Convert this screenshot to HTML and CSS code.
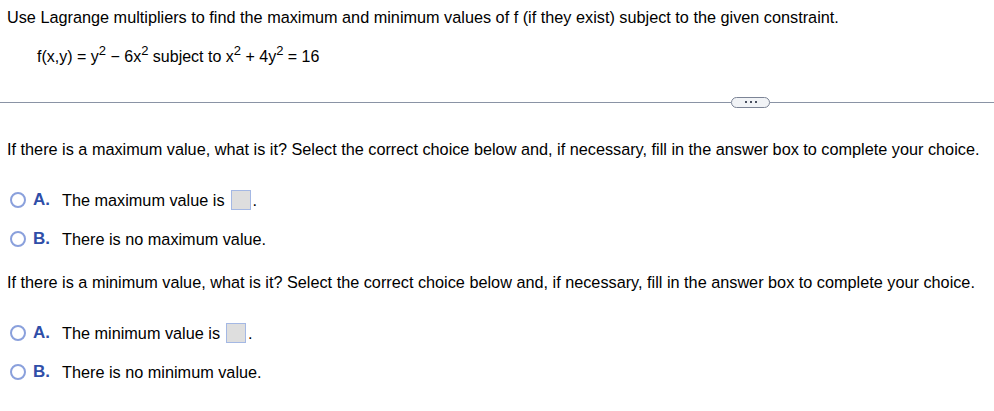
FILE: index.html
```html
<!DOCTYPE html>
<html>
<head>
<meta charset="utf-8">
<link rel="stylesheet" href="styles.css">
</head>
<body>
<div class="page">
  <p class="intro">Use Lagrange multipliers to find the maximum and minimum values of f (if they exist) subject to the given constraint.</p>
  <p class="formula">f(x,y) = y<sup>2</sup> − 6x<sup>2</sup> subject to x<sup>2</sup> + 4y<sup>2</sup> = 16</p>
  <div class="divider">
    <span class="line"></span>
    <span class="pill"><i></i><i></i><i></i></span>
    <span class="line"></span>
  </div>
  <p class="question q1">If there is a maximum value, what is it? Select the correct choice below and, if necessary, fill in the answer box to complete your choice.</p>
  <div class="choices">
    <div class="choice"><span class="radio"></span><span class="letter">A.</span><span class="text">The maximum value is <span class="box"></span>.</span></div>
    <div class="choice"><span class="radio"></span><span class="letter">B.</span><span class="text">There is no maximum value.</span></div>
  </div>
  <p class="question q2">If there is a minimum value, what is it? Select the correct choice below and, if necessary, fill in the answer box to complete your choice.</p>
  <div class="choices">
    <div class="choice"><span class="radio"></span><span class="letter">A.</span><span class="text">The minimum value is <span class="box"></span>.</span></div>
    <div class="choice"><span class="radio"></span><span class="letter">B.</span><span class="text">There is no minimum value.</span></div>
  </div>
</div>
</body>
</html>
```
FILE: styles.css
```css
html, body { margin: 0; padding: 0; background: #fff; }
body { font-family: "Liberation Sans", Arial, sans-serif; font-size: 16.25px; color: #000; }
.page { padding-top: 8px; }
p { margin: 0; }
.intro { padding-left: 7px; line-height: 18px; }
.formula { padding-left: 37px; margin-top: 22px; line-height: 18px; font-size: 16px; }
.formula sup { font-size: 13px; line-height: 0; vertical-align: 7px; }
.divider { display: flex; align-items: center; margin-top: 30px; height: 12px; }
.divider .line { height: 1px; background: #8a93a5; }
.divider .line:first-child { width: 731px; }
.divider .line:last-child { flex: 1; }
.pill { width: 37px; height: 9px; border: 1px solid #7c8496; border-radius: 6px; background: #f1f3f6; display: flex; justify-content: center; align-items: center; gap: 3px; }
.pill i { width: 2px; height: 2px; background: #4a5060; display: block; }
.question { padding-left: 7px; line-height: 18px; }
.q1 { margin-top: 32px; }
.q2 { margin-top: 24px; }
.choices { padding-left: 10px; }
.choice { display: flex; align-items: center; height: 20px; }
.choices .choice:first-child { margin-top: 32px; }
.choices .choice + .choice { margin-top: 19px; }
.radio { width: 12px; height: 12px; border: 2px solid #8aa0dc; border-radius: 50%; box-sizing: content-box; flex: none; }
.letter { color: #2f4ea8; font-weight: bold; font-size: 17px; margin-left: 7px; width: 29px; }
.text { display: flex; align-items: center; }
.box { display: inline-block; width: 18px; height: 18px; background: #dedede; border: 1px solid #a4b8e4; margin-left: 6px; margin-right: 2px; }
```
